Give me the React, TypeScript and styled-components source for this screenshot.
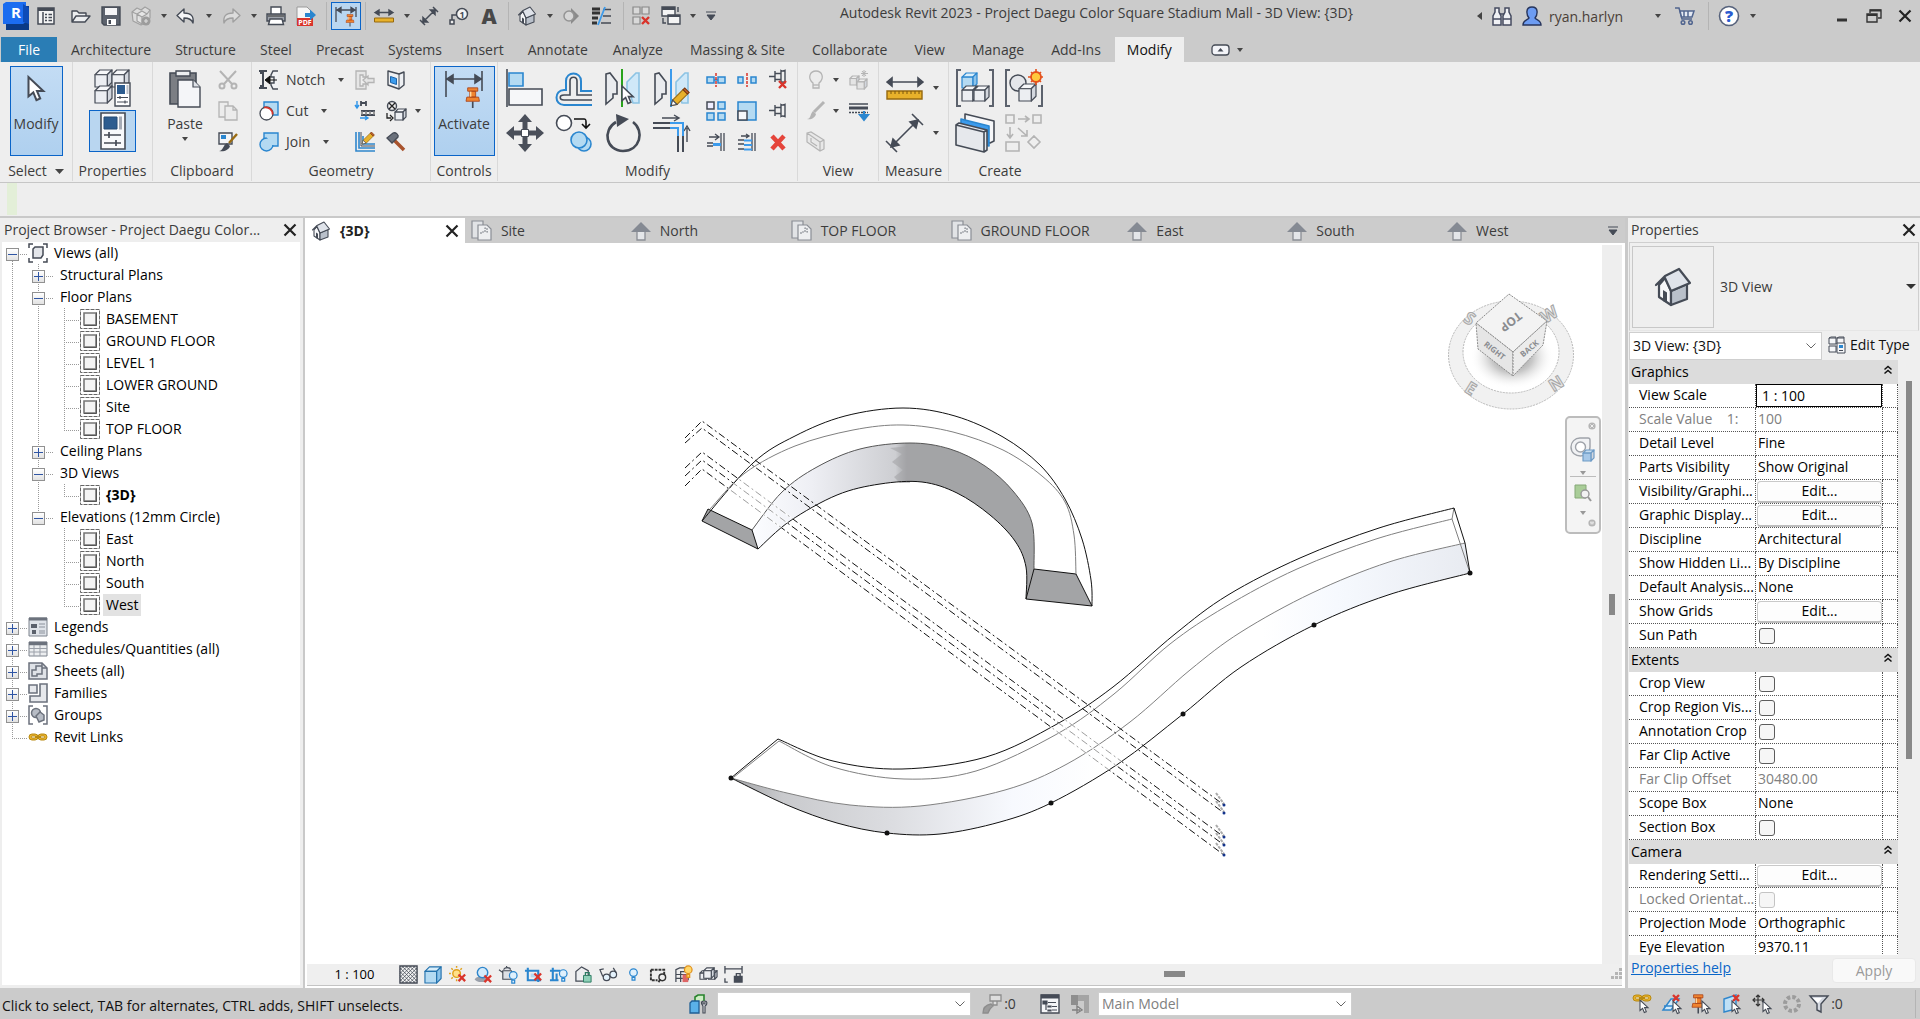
import React from 'react';
import styled, { createGlobalStyle, css } from 'styled-components';

const INK = '#454b56';
const BLUE = '#2a86cf';
const SKY = '#b4daf2';
const PALE = '#f6f7f9';
const MUTE = '#b4b4b4';
const RED = '#d9342b';
const GOLD = '#e8b12a';

/* ---------- drawings ---------- */

const cursor = (x: number, y: number, s = 1) => (
  <path
    transform={`translate(${x} ${y}) scale(${s})`}
    d="M0 0V10.500L2.600 8.300L4.300 12.500L6.300 11.600L4.600 7.600H8Z"
    fill="#fff"
    stroke={INK}
    strokeWidth="1.1"
  />
);
const cross = (x: number, y: number, s = 8) => (
  <path d={`M${x} ${y}l${s} ${s}M${x + s} ${y}l${-s} ${s}`} stroke={RED} strokeWidth="2.4" />
);
const cube = (x: number, y: number, w: number, top = PALE, front = '#eceef2', line = INK) => {
  const d = w * 0.28;
  const f = w - d;
  return (
    <g stroke={line} strokeWidth="1.2" strokeLinejoin="round">
      <path d={`M${x} ${y + d}l${d} ${-d}h${f}l${-d} ${d}z`} fill={top} />
      <path d={`M${x + f} ${y + d}l${d} ${-d}v${f}l${-d} ${d}z`} fill={SKY === front ? '#8cc3ea' : '#d3d7de'} />
      <rect x={x} y={y + d} width={f} height={f} fill={front} />
    </g>
  );
};
const house = (
  <g stroke={INK} strokeWidth="1.1" strokeLinejoin="round">
    <path d="M3 9v6l6 4V12L6 5.500z" fill={PALE} />
    <path d="M9 12v7l8-3V8.500z" fill="#b9c0ca" />
    <path d="M1.500 9L6 4.500l7-3.500 5.500 7L9 12 6 5.500z" fill="#dfe3ea" />
    <path d="M5 17v-5.500l2 1.200V18z" fill={INK} stroke="none" />
  </g>
);
const pushpin = (
  <g stroke="#a8421a" strokeWidth="1">
    <path d="M8 17v8" stroke={INK} strokeWidth="2" />
    <path d="M2 1h12v4H2zM4.500 5h7v7h-7zM1 12h14l1 5H0z" fill="#f0842f" />
    <path d="M5.500 5.500v6" stroke="#ffd9a0" strokeWidth="1.800" />
  </g>
);
const hPin = (
  <path d="M1 9.500h6M7 4v11M7 6.500h6M7 12.500h6M13 3.500c1.500 1 3 .500 4 0v12c-1-.500-2.500-1-4 0z" fill="none" stroke={INK} strokeWidth="1.400" />
);
const chain = (
  <g fill="none" stroke="#b98a12" strokeWidth="1">
    <rect x="1" y="3" width="9" height="6" rx="3" fill={GOLD} />
    <rect x="10" y="3" width="9" height="6" rx="3" fill={GOLD} />
    <rect x="3.500" y="5" width="4" height="2" rx="1" fill="#fff" />
    <rect x="12.500" y="5" width="4" height="2" rx="1" fill="#fff" />
    <path d="M7 6h6" strokeWidth="2" />
  </g>
);
const bulb = (x: number, y: number, line: string, fill: string) => (
  <g stroke={line} strokeWidth="1.300" fill={fill}>
    <circle cx={x} cy={y} r="4" />
    <path d={`M${x - 1.5} ${y + 5}h3v3h-3z`} />
  </g>
);
const pencil = (x: number, y: number, s = 1) => (
  <g transform={`translate(${x} ${y}) scale(${s})`} strokeWidth="1">
    <path d="M0 16l1.500-5L11 1.500l4 4L5.500 15z" fill={GOLD} stroke="#9a6b12" />
    <path d="M11 1.500L12.500 0l4 4-1.500 1.500z" fill="#c8642a" stroke="#7a3a12" />
    <path d="M0 16l1.500-5 4 4z" fill="#fff" stroke={INK} />
  </g>
);
const floorPlan = (
  <g stroke="#8a8e95" strokeWidth="1.200" fill="#e1e3e6">
    <path d="M1 1h11v17H1z" />
    <path d="M7 5h9l4 4v11H7z" fill="#eeeff1" />
    <path d="M10 14v-2h4V8h2v4h1" fill="none" strokeDasharray="2 1" />
  </g>
);
const elevation = (
  <g>
    <path d="M6 10h8v9H6z" fill="#e4e6e9" stroke="#8a8e95" strokeWidth="1.300" />
    <path d="M0 11L10 1l10 10z" fill="#858a93" />
  </g>
);
const dimArrow = (
  <path d="M4 16L16 4M16 4h-4.500l4.500 4.500zM4 16v-4.500L8.500 16zM1 14l5 5M14 1l5 5" stroke={INK} strokeWidth="1.500" fill={INK} />
);

type Drawing = [number, number, React.ReactNode];
const drawings: Record<string, Drawing> = {
  logo: [26, 28, <g key="g"><path d="M3 4h23v24H3z" fill="#0b3d91" /><path d="M3 20h23v8H3z" fill="#0a3a86" /><path d="M0 2l3-2h20v20l-3 2H0z" fill="#1b6cf0" /><path d="M20 2l6 4v16l-6-2z" fill="#0d4bb8" /><text x="13" y="16" textAnchor="middle" fontSize="15" fontWeight="700" fill="#fff">R</text></g>],
  home: [18, 18, <g key="g" fill="none" stroke={INK} strokeWidth="1.500"><path d="M1 1h16v16H1z" fill="#f4f4f4" /><path d="M1 2.500h16" strokeWidth="3" /><path d="M6 5v12M8 7.500h2M8 10.500h2M8 13.500h2M11.500 7.500H15M11.500 10.500H15M11.500 13.500H15" /></g>],
  open: [20, 18, <path key="g" d="M1 15V4h5l2 2h7v3M1 15L5 9h14l-5 6z" fill="#eceef0" stroke={INK} strokeWidth="1.400" strokeLinejoin="round" />],
  save: [20, 20, <g key="g"><path d="M1 1h18v18H3l-2-2z" fill="#5c626d" stroke={INK} strokeWidth="1.400" /><path d="M4 2h12v7H4z" fill="#f4f4f6" /><path d="M6 13h9v6H6z" fill="#fff" /><path d="M7.500 14h2.500v4H7.500z" fill={INK} /></g>],
  sync: [20, 20, <g key="g" stroke="#a0a0a0" strokeWidth="1.200" fill="#dcdcdc" strokeLinejoin="round"><path d="M1 6l5-4 4 2 4-3 5 3v8l-3 4-6 3-8-4z" /><path d="M6 8l5-3 5 3-5 3zM6 8v7l5 3M11 11v7M1 6l5 2M16 8l3-4" fill="#e6e6e6" /><circle cx="15" cy="15" r="4.500" fill="#9c9c9c" stroke="none" /><path d="M13 15h4M15 13v4" stroke="#ddd" /></g>],
  undo: [20, 18, <path key="g" d="M8 2v4c7 0 10 3 9 10-1.500-4-4-5-9-5v4L1 8.500z" fill="#f4f5f7" stroke={INK} strokeWidth="1.400" strokeLinejoin="round" />],
  redo: [20, 18, <path key="g" d="M12 2v4C5 6 2 9 3 16c1.500-4 4-5 9-5v4l7-6.500z" fill="#dcdcdc" stroke="#a0a0a0" strokeWidth="1.400" strokeLinejoin="round" />],
  print: [20, 20, <g key="g" stroke={INK} strokeWidth="1.400"><path d="M5 8V1h10v7" fill="#fff" /><path d="M1 8h18v7H1z" fill="#9da2ab" /><path d="M4 13h12l1.500 5.500h-15z" fill="#fff" /><path d="M2 10h16" stroke="#555" /></g>],
  pdf: [20, 20, <g key="g"><path d="M1 1h10l4 4v14H1z" fill="#f6f6f6" stroke="#999" /><path d="M1 12h16v8H1z" fill={RED} /><path d="M9 7h5V3.500l6 5.500-6 5.500V11H9z" fill={BLUE} /><text x="9" y="19" textAnchor="middle" fontSize="7" fontWeight="700" fill="#fff">PDF</text></g>],
  pinDim: [22, 20, <g key="g"><path d="M1 1v15M21 1v10M2 4h18M2 4l4-2.500v5zM20 4l-4-2.500v5z" stroke={INK} strokeWidth="1.300" fill={INK} /><g transform="translate(11 8) scale(.5)">{pushpin}</g></g>],
  ruler: [20, 14, <g key="g"><path d="M1 3.500h18M1 3.500L5 1v5zM19 3.500L15 1v5z" stroke={INK} strokeWidth="1.400" fill={INK} /><path d="M.500 9h19v4H.500z" fill={GOLD} stroke="#96690f" /></g>],
  dim: [20, 20, dimArrow],
  tag: [20, 18, <g key="g" fill="none" stroke={INK} strokeWidth="1.500"><path d="M3 14V8h6" /><path d="M1 13h4v4H1z" fill="#eee" /><circle cx="13" cy="7" r="5.500" fill="#f4f4f4" /><text x="13" y="10.500" textAnchor="middle" fontSize="9" fontWeight="700" fill={INK} stroke="none">1</text></g>],
  textA: [20, 28, <text key="g" x="10" y="22" textAnchor="middle" fontSize="21" fontWeight="800" fill="#484848">A</text>],
  house: [20, 20, house],
  section: [18, 18, <g key="g"><path d="M9 1l8 8-8 8z" fill="#8a8a8a" /><circle cx="7" cy="9" r="5" fill="#d6d6d6" stroke="#949494" strokeWidth="1.500" /></g>],
  thin: [20, 20, <g key="g"><path d="M0 3h8M0 7h8M0 12h6M0 17h5" stroke="#333" strokeWidth="3" /><path d="M11 3.500h8M11 10h8M9 17h10" stroke={INK} strokeWidth="1.500" /><path d="M6 19L13 1" stroke="#3c9bec" strokeWidth="1.800" /></g>],
  closeHidden: [20, 20, <g key="g" fill="#d9d9d9" stroke="#888" strokeWidth="1.200"><path d="M1 1h7v7H1zM10 1h7v7h-7zM1 11h7v7H1z" />{cross(10, 11, 7)}</g>],
  switchWin: [20, 20, <g key="g" fill="#f4f4f4" stroke={INK} strokeWidth="1.400"><path d="M1 1h13v9H1z" /><path d="M1 2.500h13" strokeWidth="3" /><path d="M7 9h12v9H7z" /><path d="M7 10h12" strokeWidth="2" /><path d="M17 1v5M2 12v5h3" fill="none" /></g>],
  customize: [10, 10, <path key="g" d="M0 1h10M1 4h8L5 9z" fill={INK} stroke={INK} />],
  binoculars: [22, 20, <g key="g" fill="#f0f1f5" stroke="#454b60" strokeWidth="1.500"><path d="M4 2h4v4l2 4v9H2v-9l2-4zM14 2h4v4l2 4v9h-8v-9l2-4z" /><path d="M9 8h4M2 13h8M12 13h8" /></g>],
  user: [20, 20, <path key="g" d="M10 1c7 0 5.500 8 3 11 1 2 6 2 6 7H1c0-5 5-5 6-7-2.500-3-4-11 3-11z" fill="#6d9cf2" stroke="#27355c" strokeWidth="1.400" />],
  cart: [20, 20, <g key="g" stroke="#51658f" strokeWidth="1.500" fill="none"><path d="M0 2h4l3 11h10" /><path d="M5 5h14l-2 6H6.500z" fill="#e4e9f2" /><path d="M9 5v6M13 5v6" /><circle cx="8" cy="16.500" r="1.800" /><circle cx="15.500" cy="16.500" r="1.800" /></g>],
  help: [22, 22, <g key="g"><circle cx="11" cy="11" r="9.500" fill="#fff" stroke="#56627c" strokeWidth="1.600" /><text x="11" y="17" textAnchor="middle" fontSize="16" fontWeight="800" fill="#2a5bd0">?</text></g>],
  ribbonState: [20, 12, <g key="g"><rect x="1" y="1" width="17" height="10" rx="3" fill="#f3f4f8" stroke={INK} strokeWidth="1.300" /><path d="M6.500 7.500L9.500 4l3 3.500z" fill={INK} /></g>],
  winMin: [12, 12, <path key="g" d="M1 10h10" stroke="#333" strokeWidth="3" />],
  winRestore: [16, 16, <g key="g" fill="none" stroke="#333" strokeWidth="1.400"><path d="M4 5V2h11v8h-3" /><path d="M1 6h10v8H1z" /><path d="M1 7h10M4 2.500h11" strokeWidth="2" /></g>],
  winClose: [14, 14, <path key="g" d="M1.500 1.500l11 11M12.500 1.500l-11 11" stroke="#222" strokeWidth="2.200" />],

  modify: [18, 28, <g key="g">{cursor(1.5, 2, 1.85)}</g>],
  typeProps: [38, 38, <g key="g">{cube(1, 1, 17)}{cube(18, 1, 17)}{cube(1, 17, 17)}<path d="M21 14h15v23H21z" fill="#fff" stroke={INK} strokeWidth="1.400" /><path d="M23 16h8v9h-8z" fill="#2d5c8f" /><path d="M32.500 16h2v9h-2z" fill="#b9bdc6" /><path d="M23 28.500h11M23 33h11M26 27v3M31 31.500v3" stroke={INK} strokeWidth="1.200" /></g>],
  props: [28, 38, <g key="g"><path d="M2 1h24v36H2z" fill="#f8f9fb" stroke={INK} strokeWidth="1.600" /><path d="M5 5h13v12H5z" fill="#2d5c8f" stroke="#254a75" /><path d="M20 4.500h3v13h-3z" fill="#a5abb6" /><path d="M5 23h17M5 31h17M10 20v6M17 28v6" stroke={INK} strokeWidth="1.700" /></g>],
  paste: [34, 38, <g key="g"><path d="M2 3h26v31H2z" fill="#7b7e84" stroke={INK} strokeWidth="1.600" /><path d="M8 1h14v5H8z" fill="#eceef0" stroke={INK} strokeWidth="1.400" /><path d="M10 10h15l7 7v20H10z" fill="#f4f5f8" stroke={INK} strokeWidth="1.400" /><path d="M25 10v7h7" fill="#dfe2e8" stroke={INK} strokeWidth="1.200" /></g>],
  scissors: [20, 20, <g key="g" fill="none" stroke={MUTE} strokeWidth="2"><path d="M2 1l12 13M18 1L6 14" /><circle cx="4" cy="16" r="2.500" /><circle cx="16" cy="16" r="2.500" /></g>],
  copyClip: [20, 20, <g key="g" fill="#ececec" stroke={MUTE} strokeWidth="1.300"><path d="M1 1h9v15H1z" /><path d="M7 5h8l4 4v10H7zM15 5v4h4" /></g>],
  matchBrush: [20, 20, <g key="g"><path d="M1 1h13v11H1z" fill="#f4f5f7" stroke={INK} strokeWidth="1.400" /><path d="M3 3h5v4H3z" fill={BLUE} /><path d="M19 2l-8 9" stroke="#9a6b12" strokeWidth="2.400" /><path d="M1 19c4 0 4-6 8-8l3 3c-1 4-6 6-11 5z" fill={INK} /></g>],
  notch: [20, 20, <g key="g"><path d="M0 1h8M0 18h8M4 1v17M2 1v3M2 18v-3" stroke={INK} strokeWidth="2" /><path d="M19 1h-5l-2 4v2h3v6h-3v2l2 4h5" fill="#f0f1f3" stroke={INK} strokeWidth="1.400" /><path d="M7 10h11M11 6v8l-5-4z" fill="#111" stroke="#111" /></g>],
  cut: [20, 20, <g key="g"><path d="M5 1h14v13H5z" fill={SKY} stroke={BLUE} strokeWidth="1.400" /><circle cx="7.500" cy="12.500" r="6.500" fill="#fff" stroke={INK} strokeWidth="1.300" /><path d="M5 6.500c5-1 9 3 8.500 7" fill="none" stroke={RED} strokeWidth="1.600" /></g>],
  join: [20, 20, <g key="g" fill={SKY} stroke={BLUE} strokeWidth="1.400"><path d="M5 1h14v13H5z" /><circle cx="7.500" cy="12.500" r="6.500" /><path d="M6 3h12v10h-5z" stroke="none" /></g>],
  wallOpen: [20, 20, <path key="g" d="M1 1h10v6H8V5H5v11h3v-2h3v5H1zM8 10l5-4v2.500h6v4h-6V15z" fill="#e6e6e6" stroke={MUTE} strokeWidth="1.300" />],
  splitFace: [20, 20, <g key="g"><path d="M2 1l11 3 5-2v13l-5 4-11-4z" fill="#eef0f3" stroke={INK} strokeWidth="1.400" strokeLinejoin="round" /><path d="M13 4v15" stroke={INK} /><path d="M4.500 6.500l6 2v6l-6-2z" fill="#3c9bec" stroke="#1c62a8" /></g>],
  cope: [20, 20, <g key="g" fill="none"><path d="M2 0v6M0 4l2 3 2-3M5 17h7M10 15l3 2-3 2" stroke="#2e94e8" strokeWidth="1.400" /><path d="M6 0v5M11 0v5M6 2h5M6 10h14M6 14h14" stroke={INK} strokeWidth="1.800" /><path d="M6 12h14" stroke="#999" strokeDasharray="2 2" strokeWidth="3" /></g>],
  demolish: [20, 20, <g key="g"><circle cx="6" cy="5" r="4.500" fill="#eee" stroke={INK} strokeWidth="1.400" /><path d="M3 2l6 6M9 2L3 8M1 12v5h4M4 14l3 3-3 3" stroke="#222" fill="none" strokeWidth="1.300" />{cube(9, 8, 11)}</g>],
  wallJoin: [20, 20, <g key="g" fill="none"><path d="M1 0v19h19M4 0v16h16M8 4v8h12" stroke="#2f86cc" strokeWidth="1.600" /><path d="M6 0v14h14" stroke={INK} />{pencil(7, 0, 0.75)}</g>],
  hammer: [20, 20, <g key="g"><path d="M8 8l10 10" stroke="#a8532d" strokeWidth="3.500" /><path d="M1 6l6-5c3-1 6 2 5 4l-6 6z" fill="#6b717c" stroke={INK} strokeWidth="1.300" /></g>],
  activate: [38, 38, <g key="g"><path d="M1 1v26M37 1v20M2 9h34M2 9l6-4v8zM36 9l-6-4v8z" stroke={INK} strokeWidth="1.600" fill={INK} /><g transform="translate(21 17) scale(.84)">{pushpin}</g></g>],

  align: [38, 38, <g key="g"><path d="M1 0v38" stroke={INK} strokeWidth="1.600" /><path d="M3 4h14v13H3z" fill={SKY} stroke={BLUE} strokeWidth="1.600" /><path d="M3 20h33v16H3z" fill={PALE} stroke={INK} strokeWidth="1.600" /></g>],
  offset: [38, 38, <g key="g" fill="none"><path d="M37 36H9c-10 0-10-15 0-15h2V12c0-10 15-10 15 0v10h11" stroke={BLUE} strokeWidth="2" /><path d="M37 31H9c-5 0-5-5 0-5h6V12c0-5 7-5 7 0v14h15" stroke={INK} strokeWidth="1.600" /></g>],
  mirrorPick: [38, 38, <g key="g" strokeWidth="1.600"><path d="M2 5l4-1 7 9v12h-4v4l-7 6z" fill="#e9ebee" stroke={INK} /><path d="M35 4h-3l-9 9v13l4 2 2 6h6z" fill="#cfe8f8" stroke="#8cc3e4" /><path d="M18 0v38" stroke="#29a31a" strokeWidth="2" />{cursor(18, 17, 1.4)}</g>],
  mirrorDraw: [38, 38, <g key="g" strokeWidth="1.600"><path d="M2 5l4-1 7 9v12h-4v4l-7 6z" fill="#e9ebee" stroke={INK} /><path d="M35 4h-3l-9 9v13l4 2 2 6h6z" fill="#cfe8f8" stroke="#8cc3e4" /><path d="M18 0v38" stroke="#3c9bec" strokeWidth="2" />{pencil(18, 19, 1.1)}</g>],
  move: [38, 38, <g key="g" fill="#4a4f5a"><path d="M19 0l7 8h-4.500v7h-5V8H12zM19 38l7-8h-4.500v-7h-5v7H12zM0 19l8-7v4.500h7v5H8V26zM38 19l-8-7v4.500h-7v5h7V26z" /><path d="M15.500 15.500h7v7h-7z" fill="#fff" stroke={INK} /></g>],
  copy: [38, 38, <g key="g" strokeWidth="1.600"><circle cx="9" cy="9" r="7.500" fill="#fff" stroke={INK} /><path d="M19 5h10c2 0 2 1 2 3v5M27 10l4 4 4-4" fill="none" stroke="#111" /><circle cx="29" cy="30" r="7" fill={SKY} stroke={BLUE} /><circle cx="24" cy="26" r="8" fill={SKY} stroke={BLUE} /></g>],
  rotate: [38, 38, <g key="g"><path d="M12 8C-2 16 2 37 19 37S41 17 29 8" fill="none" stroke={INK} strokeWidth="2.600" /><path d="M12 0l13 5-12 8z" fill={INK} /></g>],
  trim: [38, 38, <g key="g" fill="none"><path d="M9 4h16M21 1l5 3-5 3M34 28V14M31 17l3-5 3 5" stroke={INK} strokeWidth="1.400" /><path d="M0 9h17M0 14h17M25 22v16M30 22v16" stroke={INK} strokeWidth="2" /><path d="M17 9h13v13M17 14h8v8" stroke="#3c9bec" strokeWidth="2" /></g>],
  split: [20, 20, <g key="g"><path d="M1 7h7v6H1zM12 7h7v6h-7zM8 10h4" fill={SKY} stroke={BLUE} strokeWidth="1.500" /><path d="M10 3v14" stroke={RED} strokeWidth="1.500" strokeDasharray="3 1" /></g>],
  splitGap: [20, 20, <g key="g"><path d="M1 7h5v6H1zM14 7h5v6h-5z" fill={SKY} stroke={BLUE} strokeWidth="1.500" /><path d="M10 3v14" stroke={RED} strokeWidth="1.500" strokeDasharray="3 1" /></g>],
  unpin: [20, 20, <g key="g"><g transform="translate(0 -3)">{hPin}</g>{cross(11, 11, 7)}</g>],
  array: [20, 20, <g key="g" strokeWidth="1.500"><path d="M1 1h7v7H1z" fill="#eef" stroke={INK} /><path d="M12 1h7v7h-7zM1 12h7v7H1zM12 12h7v7h-7z" fill={SKY} stroke={BLUE} /></g>],
  scale: [20, 20, <g key="g" strokeWidth="1.500"><path d="M1 1h18v18H1z" fill={SKY} stroke={BLUE} /><path d="M1 10h9v9H1z" fill={PALE} stroke={INK} /></g>],
  pin: [20, 20, hPin],
  trimOne: [20, 20, <g key="g"><path d="M18 1v18M15 1v18M1 11h6M1 14h6M3 5h9M9 2l4 3-4 3" stroke={INK} strokeWidth="1.300" fill="none" /><path d="M7 12.500h8" stroke="#3c9bec" strokeWidth="3" /></g>],
  trimMany: [20, 20, <g key="g"><path d="M18 1v18M15 1v18M1 8h6M1 12h6M1 17h6M4 4h8M9 2l3 2-3 2" stroke={INK} strokeWidth="1.300" fill="none" /><path d="M7 8.500h8M7 13h8M7 17.500h8" stroke="#3c9bec" strokeWidth="2" /></g>],
  remove: [20, 20, <path key="g" d="M4 4l12 13M16 4L4 17" stroke="#e5453b" strokeWidth="4.500" />],
  hideBulb: [20, 20, <g key="g" fill="#ececec" stroke={MUTE} strokeWidth="1.300"><path d="M7 13C1 8 4 1 10 1s9 7 3 12v5H7z" /><path d="M7 15h6" /></g>],
  displace: [20, 20, <g key="g">{cube(1, 6, 9, '#eee', '#e4e4e4', MUTE)}{cube(8, 9, 10, '#eee', '#e4e4e4', MUTE)}<path d="M15 0v7M12 3.500h7M13 1l4 5M17 1l-4 5" stroke={MUTE} /></g>],
  override: [20, 20, <g key="g"><path d="M18 1L8 11" stroke={MUTE} strokeWidth="3" /><path d="M1 18c4 0 3-5 6-8l3 3c-1 4-5 6-9 5z" fill={MUTE} /></g>],
  linework: [20, 20, <g key="g"><path d="M0 3h19" stroke={INK} strokeWidth="1.500" /><path d="M0 7h19" stroke={INK} strokeWidth="3" /><path d="M0 11.500h19" stroke={INK} strokeWidth="1.500" strokeDasharray="2 1" /><path d="M15 10v4M11 14h8l-4 5z" stroke={BLUE} strokeWidth="2" fill={BLUE} /></g>],
  viewBox: [20, 20, <path key="g" d="M1 1l4-1 13 8v9l-4 2L1 10zM1 1l13 9v9M14 10l4-2M5 6l0 4 6 4" fill="#e8e8e8" stroke={MUTE} strokeWidth="1.200" />],
  measure: [38, 24, <g key="g"><path d="M1 6h36M1 6l5-4v8zM37 6l-5-4v8z" stroke={INK} strokeWidth="1.600" fill={INK} /><path d="M1 15h35v8H1z" fill={GOLD} stroke="#96690f" strokeWidth="1.400" /><path d="M5 15v3M9 15v3M13 15v3M17 15v3M21 15v3M25 15v3M29 15v3M33 15v3" stroke="#7a560c" /></g>],
  aligned: [38, 38, <path key="g" d="M5 33L32 6M32 6l-8 2 6 6zM5 33l2-8 6 6zM0 27l11 11M26 0l11 11" stroke={INK} strokeWidth="1.600" fill={INK} />],
  assembly: [38, 38, <g key="g"><path d="M5 1H1v36h4M33 1h4v36h-4" fill="none" stroke="#5c626d" strokeWidth="2" />{cube(6, 4, 15, '#d9eefa', SKY, BLUE)}{cube(6, 17, 15)}{cube(18, 17, 15)}</g>],
  group: [38, 38, <g key="g"><path d="M5 1H1v36h4M33 37h4V16" fill="none" stroke="#5c626d" strokeWidth="2" /><circle cx="13" cy="14" r="8" fill="#e4e6ea" stroke={INK} strokeWidth="1.400" />{cube(14, 15, 17)}<circle cx="31" cy="8" r="5" fill="#ffc83c" stroke="#e4511c" strokeWidth="1.800" /><path d="M31 0v3M31 13v3M23 8h3M36 8h2M26 3l2 2M36 13l-2-2M26 13l2-2M36 3l-2 2" stroke="#e4511c" strokeWidth="1.600" /></g>],
  parts: [40, 40, <g key="g" strokeWidth="1.600" strokeLinejoin="round"><path d="M10 1l29 7v20l-4 2-25-7z" fill={PALE} stroke={INK} /><path d="M6 6l28 7v20L6 26z" fill="#3c9bec" stroke={BLUE} /><path d="M1 12l3-2 28 7-3 2v20L1 32zM32 17v20l-3 2V19zM1 12l28 7" fill="#e6e8ec" stroke={INK} /></g>],
  similar: [38, 38, <g key="g" fill="none" stroke={MUTE} strokeWidth="1.600"><path d="M1 1h8v8H1zM28 1h8v8h-8zM1 28h13v9H1zM29 22l6 6-6 6-6-6zM13 5h11M20 2l4 3-4 3M5 13v11M2 20l3 4 3-4M13 14l9 8M22 16v6h-6" /></g>],

  viewsRoot: [20, 20, <g key="g" fill="none" stroke={INK} strokeWidth="1.500"><path d="M1 5V1h4M15 1h4v4M19 15v4h-4M5 19H1v-4" /><path d="M5 6l2-2h8v8l-2 3H5z" fill="#e4e6ea" /></g>],
  sheetIcon: [20, 20, <g key="g"><path d="M.500.500h19v19H.500z" fill="none" stroke="#666" strokeDasharray="4 1" /><path d="M4 4h12v12H4z" fill="#f4f4f4" stroke="#777" strokeWidth="1.600" /><path d="M16.500 3.500V16.500H4" fill="none" stroke="#555" /></g>],
  legends: [20, 20, <g key="g"><path d="M1 1h18v18H1z" fill="#dfe3e9" stroke="#7d838d" /><path d="M1 2h18" stroke="#6c727d" strokeWidth="3" /><path d="M3 7h6v4H3zM4 13h4v4H4z" fill="#5b616c" /><path d="M11 7h6M11 10h6M11 14h6M11 16h6" stroke="#8b919b" /></g>],
  schedules: [20, 16, <g key="g"><path d="M1 1h18v14H1z" fill="#eceef0" stroke="#7d838d" /><path d="M1 2.500h18" stroke="#6c727d" strokeWidth="3.500" /><path d="M6 4v11M12 4v11M1 7.500h18M1 11h18" stroke="#9ba0a9" /></g>],
  sheets: [20, 18, <g key="g" fill="#dfe2e7" stroke="#6c727d" strokeWidth="1.500"><path d="M1 1h13l5 5v11H1z" /><path d="M4 14V8h4V4h6v8H9v2zM14 1v5h5" fill="none" /></g>],
  families: [20, 20, <path key="g" d="M1 2h8v8H1zM12 1h7v18H2v-6h10z" fill="#e6e8ec" stroke="#6c727d" strokeWidth="1.600" />],
  groups: [20, 20, <g key="g" fill="#b7bcc5" stroke="#6c727d" strokeWidth="1.500"><path d="M5 1H1v18h4M15 1h4v18h-4" fill="none" /><circle cx="8" cy="8" r="4.500" /><path d="M8 11l4-4 4 3v5l-5 2z" /></g>],
  links: [20, 12, chain],
  plan: [21, 21, floorPlan],
  elev: [20, 20, elevation],

  editType: [18, 18, <g key="g" fill="#f6f7f9" stroke={INK}><path d="M1 2h7v6H1zM9 2h7v6H9zM1 10h7v6H1zM1 2l2-1h5v1M9 2l2-1h5v1" /><path d="M9 7h8v10H9z" /><path d="M11 9h4v3h-4z" fill={BLUE} stroke="none" /><path d="M11 14.500h4" /></g>],
  collapse: [10, 10, <path key="g" d="M1.500 4.500L5 1.500l3.500 3M1.500 8.500L5 5.500l3.500 3" fill="none" stroke="#111" strokeWidth="1.500" />],
  chevron: [10, 6, <path key="g" d="M.500.500L5 5 9.500.500" fill="none" stroke="#666" />],

  vDetail: [20, 20, <g key="g" stroke={INK}><path d="M1 1h18v18H1z" fill="#f4f4f4" strokeWidth="1.500" /><path d="M1 5l4-4M1 9l8-8M1 13L13 1M1 17L17 1M3 19L19 3M7 19L19 7M11 19l8-8M15 19l4-4M5 19L1 15M9 19l-8-8M13 19L1 7M17 19L1 3M19 17L3 1M19 13L7 1M19 9l-8-8M19 5l-4-4" strokeWidth=".800" /></g>],
  vStyle: [20, 20, <g key="g">{cube(1, 2, 17, '#d9eefa', SKY, '#2472ad')}</g>],
  vSun: [20, 20, <g key="g"><circle cx="8" cy="9" r="4" fill="#ffe08a" stroke="#e0a01c" strokeWidth="1.500" /><path d="M8 1v2M8 15v2M0 9h2M2.500 3.500l1.500 1.500M13.500 3.500L12 5M2.500 14.500L4 13" stroke="#e0a01c" strokeWidth="1.500" />{cross(10, 10, 7)}</g>],
  vShadow: [20, 20, <g key="g"><ellipse cx="8" cy="15" rx="7" ry="3" fill="#9aa0aa" /><circle cx="9" cy="8" r="5.500" fill="#d4ebfa" stroke="#2f86cc" strokeWidth="1.500" />{cross(11, 11, 7)}</g>],
  vRender: [20, 20, <g key="g"><path d="M4 6h9l1 9H4zM5 5c0-3 7-3 7 0M4 8L0 5M8 2V1" fill="#dde0e5" stroke={INK} strokeWidth="1.200" />{bulb(15, 11, BLUE, '#dff0fc')}</g>],
  vCrop: [20, 20, <g key="g"><path d="M4 3v13h14M1 6h14v12" fill="none" stroke={BLUE} strokeWidth="2.200" /><path d="M7 9h5v4H7z" fill={SKY} />{cross(11, 9, 7)}</g>],
  vCropShow: [20, 20, <g key="g"><path d="M4 3v14M1 6h11M1 16h9M8 9v6" fill="none" stroke={BLUE} strokeWidth="2.200" />{bulb(15, 9, BLUE, '#dff0fc')}</g>],
  vLock: [20, 20, <g key="g"><path d="M2 17V7l6-5 7 4v11z" fill="#eceef0" stroke={INK} strokeWidth="1.300" /><path d="M10 11h8v7h-8z" fill="#8fd0b8" stroke="#2b7a62" /><path d="M12 11V8h4v3" fill="none" stroke="#2b7a62" strokeWidth="1.300" /></g>],
  vGlasses: [20, 20, <g key="g" fill="#e4f2fc" stroke={INK} strokeWidth="1.300"><circle cx="8" cy="13" r="3.500" /><circle cx="15" cy="10" r="3.500" /><path d="M4 12L1 5l4-1M18 8l-3-5" fill="none" /></g>],
  vReveal: [20, 20, <g key="g">{bulb(10, 8, BLUE, '#dff0fc')}</g>],
  vWork: [20, 20, <g key="g" fill="none" stroke="#333" strokeWidth="2"><path d="M2 5h14v5M2 5v11h7" strokeDasharray="3 1" /><circle cx="14" cy="13" r="3.500" strokeWidth="1.500" fill="#eee" /><path d="M12 15l-2 3" /></g>],
  vAnalytical: [20, 20, <g key="g"><path d="M2 18V5l4-2h9v13M7 18V7h8M2 10h13M2 14h13" fill="none" stroke={INK} strokeWidth="1.300" /><path d="M9 10h6v8H9z" fill="#d66" />{bulb(15, 5, '#e0901c', '#ffd76a')}</g>],
  vDisplace: [20, 20, <g key="g">{cube(1, 6, 9)}{cube(10, 6, 9)}{cube(5, 3, 11)}</g>],
  vConstraint: [20, 20, <g key="g" fill="none" stroke={INK} strokeWidth="1.400"><path d="M1 1v8M19 1v8M1 4h18M4 18H1v-4" /><path d="M11 12h8v6h-8z" fill={INK} /><path d="M13 12V9h4v3" /></g>],

  worksets: [20, 20, <g key="g"><path d="M6 7V3l3-2h6v6" fill="#cdeec4" stroke="#27832c" strokeWidth="1.600" /><path d="M1 9l2-2h7v12H1z" fill="#5ab1e8" stroke="#1f5f95" strokeWidth="1.300" /><path d="M14 19v-7c-3-3-1-5 0-5v3h2V7c2 0 3 3 0 5v7z" fill="#f4f5f8" stroke={INK} strokeWidth="1.200" /></g>],
  editable: [20, 20, <g key="g" fill="#dedede" stroke="#8d8d8d" strokeWidth="1.300"><path d="M8 1h11v6H8zM11 7v4h4V7" /><path d="M1 19c0-5 3-8 8-9l2 2c-3 2-4 4-5 7z" fill="#9c9c9c" /></g>],
  options: [20, 20, <g key="g"><path d="M1 1h18v18H1z" fill="#f4f5f7" stroke={INK} strokeWidth="1.400" /><path d="M1 2.500h18" stroke={INK} strokeWidth="4" /><path d="M3 7h4v3H3zM8 8.500h8M6 10v6M8 12h3v1H8zM12 12.500h5M8 16h3v1H8zM12 16h5" stroke={INK} fill={INK} strokeWidth="1.200" /></g>],
  pickEdit: [20, 20, <g key="g"><path d="M1 1h18v18h-5V7H1z" fill="#a4a4a4" /><path d="M1 1h7v10H1z" fill="#8e8e8e" /><path d="M2 16h8M7 12l5 4-5 3z" fill="#e4e4e4" stroke="#808080" strokeWidth="1.400" /></g>],
  selLinks: [20, 20, <g key="g"><g transform="translate(0 -2)">{chain}</g>{cursor(8, 6)}</g>],
  selUnderlay: [20, 20, <g key="g"><path d="M1 16L9 5h8L9 16zM2 12h12" fill="#d4ebfa" stroke="#2f86cc" strokeWidth="1.400" />{cross(11, 1, 6)}{cursor(11, 7)}</g>],
  selPinned: [20, 20, <g key="g"><g transform="translate(0 0) scale(.78)">{pushpin}</g>{cursor(10, 7)}</g>],
  selFace: [20, 20, <g key="g"><path d="M2 5l12-4v14L2 18z" fill="#bfe0f6" stroke="#2f86cc" strokeWidth="1.400" />{cross(11, 1, 6)}{cursor(10, 7)}</g>],
  dragSel: [20, 20, <g key="g"><path d="M6 1v11M1 6h11M4 3l2-2 2 2M4 10l2 2 2-2M3 4L1 6l2 2M10 4l2 2-2 2" fill="none" stroke="#333" strokeWidth="1.200" />{cursor(11, 7)}</g>],
  background: [20, 20, <circle key="g" cx="10" cy="10" r="7" fill="none" stroke="#9c9c9c" strokeWidth="4" strokeDasharray="3.500 2" />],
  filter: [20, 20, <g key="g"><path d="M1 2h18l-7 8v8l-4-2v-6z" fill="#d6dae2" stroke={INK} strokeWidth="1.400" /><path d="M4 4h9l-4 5z" fill="#fff" /></g>],
  grip: [12, 12, <path key="g" d="M9 0h3v3H9zM5 4h3v3H5zM9 4h3v3H9zM1 8h3v3H1zM5 8h3v3H5zM9 8h3v3H9z" fill="#b5b5b5" />],
  wheel: [26, 26, <g key="g"><path d="M10 1h8c2 0 2 1 2 2v7c0 12-19 12-19 0 0-5 4-9 9-9z" fill="#f1f2f4" stroke="#9ea2a9" strokeWidth="1.400" /><circle cx="10.500" cy="10" r="5" fill="#fff" stroke="#9ea2a9" strokeWidth="1.400" />{cube(13, 13, 11, '#c6ddf1', '#a7c8e8', '#6f9cc6')}</g>],
  zoomRegion: [18, 18, <g key="g"><path d="M1 1h11v13H1z" fill="#a9cd98" stroke="#85a877" /><circle cx="11" cy="10" r="4" fill="#f2f2f2" stroke="#999" strokeWidth="1.400" /><path d="M14 13l3 4" stroke="#999" strokeWidth="2" /></g>],
  navClose: [10, 10, <g key="g"><circle cx="5" cy="5" r="4.500" fill="#b5b5b5" /><path d="M3 3l4 4M7 3L3 7" stroke="#fff" /></g>],
  navMenu: [10, 10, <g key="g"><circle cx="5" cy="5" r="4.500" fill="#b5b5b5" /><path d="M2.500 4h5M3 6h4" stroke="#fff" /></g>],
};

const Glyph = styled.svg`
  display: block;
  flex: none;
  overflow: visible;
`;
const Icon = ({ name, scale = 1 }: { name: string; scale?: number }) => {
  const [w, h, body] = drawings[name];
  return (
    <Glyph width={w * scale} height={h * scale} viewBox={`0 0 ${w} ${h}`} aria-hidden="true">
      {body}
    </Glyph>
  );
};
const Caret = ({ color = '#454545' }: { color?: string }) => (
  <Glyph width="6" height="4" viewBox="0 0 6 4" aria-hidden="true">
    <path d="M0 0h6L3 4z" fill={color} />
  </Glyph>
);

/* ---------- shell ---------- */

const Global = createGlobalStyle`
  *, *::before, *::after { box-sizing: border-box; }
  body { margin: 0; background: #cccccc; }
  body, button, input, select { font-family: "Open Sans", "Noto Sans", sans-serif; font-size: 14px; color: #3c3c3c; }
  button { padding: 0; margin: 0; border: 0; background: none; cursor: pointer; }
  ul { list-style: none; margin: 0; padding: 0; }
`;
const Shell = styled.div`
  display: flex;
  flex-direction: column;
  height: 100vh;
  overflow: hidden;
  background: #cbcbcb;
  line-height: 20px;
  white-space: nowrap;
`;

/* ---------- title bar ---------- */

const TitleBar = styled.header`
  display: flex;
  align-items: flex-start;
  height: 37px;
`;
const Tools = styled.div`
  display: flex;
  align-items: center;
  height: 32px;
`;
const Tool = styled.button<{ $w?: number; $on?: boolean }>`
  display: flex;
  align-items: center;
  justify-content: center;
  width: ${p => p.$w ?? 30}px;
  height: 28px;
  ${p => p.$on && css`background: #b9d6f0; border: 1px solid #0a64c8;`}
`;
const Rule = styled.span<{ $w?: number }>`
  width: ${p => p.$w ?? 10}px;
  height: 28px;
  background: linear-gradient(#b4b4b4, #b4b4b4) center / 1px 100% no-repeat;
`;
const Gap = styled.span<{ $w: number }>`
  width: ${p => p.$w}px;
`;
const Title = styled.h1`
  flex: 1;
  margin: 0;
  padding-top: 2px;
  font-size: 14px;
  font-weight: 400;
  line-height: 22px;
  text-align: center;
`;
const Account = styled.button`
  display: flex;
  align-items: center;
  justify-content: space-between;
  gap: 7px;
  width: 141px;
  padding-right: 2px;
`;
const UserName = styled.span`
  flex: 1;
  text-align: left;
  color: #4a4038;
`;

type QatItem = { icon: string; label: string; w?: number; menu?: boolean; on?: boolean; rule?: number; gap?: number };
const quickAccess: QatItem[] = [
  { icon: 'logo', label: 'Revit', w: 31 },
  { icon: 'home', label: 'Home', gap: 5 },
  { icon: 'open', label: 'Open' },
  { icon: 'save', label: 'Save' },
  { icon: 'sync', label: 'Synchronize', menu: true },
  { icon: 'undo', label: 'Undo', menu: true },
  { icon: 'redo', label: 'Redo', menu: true },
  { icon: 'print', label: 'Print' },
  { icon: 'pdf', label: 'Export PDF', rule: 10 },
  { icon: 'pinDim', label: 'Activate controls', on: true, rule: 8 },
  { icon: 'ruler', label: 'Measure', menu: true },
  { icon: 'dim', label: 'Aligned dimension' },
  { icon: 'tag', label: 'Tag by category' },
  { icon: 'textA', label: 'Text', rule: 8 },
  { icon: 'house', label: 'Default 3D view', menu: true },
  { icon: 'section', label: 'Section', w: 28 },
  { icon: 'thin', label: 'Thin lines', w: 34, rule: 8 },
  { icon: 'closeHidden', label: 'Close inactive views' },
  { icon: 'switchWin', label: 'Switch windows', w: 28, menu: true },
  { icon: 'customize', label: 'Customize', w: 22 },
];

const AppTitle = () => (
  <TitleBar>
    <Tools>
      {quickAccess.map(q => (
        <React.Fragment key={q.label}>
          <Tool $w={q.w} $on={q.on} aria-label={q.label}><Icon name={q.icon} /></Tool>
          {q.menu && <Tool $w={15} aria-label={`${q.label} menu`}><Caret /></Tool>}
          {q.gap && <Gap $w={q.gap} />}
          {q.rule && <Rule $w={q.rule} />}
        </React.Fragment>
      ))}
    </Tools>
    <Title>Autodesk Revit 2023 - Project Daegu Color Square Stadium Mall - 3D View: {'{3D}'}</Title>
    <Tools>
      <Tool $w={16} aria-label="Collapse search">
        <Glyph width="5" height="8" viewBox="0 0 5 8"><path d="M5 0v8L0 4z" fill="#444" /></Glyph>
      </Tool>
      <Tool aria-label="Search"><Icon name="binoculars" /></Tool>
      <Gap $w={5} />
      <Account><Icon name="user" /><UserName>ryan.harlyn</UserName><Caret /></Account>
      <Gap $w={4} />
      <Tool $w={36} aria-label="Store"><Icon name="cart" /></Tool>
      <Rule />
      <Tool $w={32} aria-label="Help"><Icon name="help" /></Tool>
      <Tool $w={15} aria-label="Help menu"><Caret /></Tool>
      <Gap $w={66} />
      <Tool $w={32} aria-label="Minimize"><Icon name="winMin" /></Tool>
      <Tool $w={32} aria-label="Restore"><Icon name="winRestore" /></Tool>
      <Tool aria-label="Close"><Icon name="winClose" /></Tool>
    </Tools>
  </TitleBar>
);

/* ---------- ribbon ---------- */

const Tabs = styled.nav`
  display: flex;
  height: 25px;
  padding-left: 1px;
`;
const Tab = styled.button<{ $kind?: 'file' | 'active' | 'wide' }>`
  height: 25px;
  padding: 0 12px;
  ${p => p.$kind === 'file' && css`width: 56px; margin-right: 2px; background: #2a7db5; color: #fff;`}
  ${p => p.$kind === 'wide' && css`padding: 0 14px 0 13px;`}
  ${p => p.$kind === 'active' && css`background: #eeeeee; color: #111;`}
`;
const TabTools = styled.button`
  display: flex;
  align-items: center;
  gap: 6px;
  margin-left: 27px;
`;
const Ribbon = styled.section`
  display: flex;
  height: 121px;
  background: #eeeeee;
  border-bottom: 1px solid #c6c6c6;
`;
const Panel = styled.div<{ $w: number }>`
  display: flex;
  flex-direction: column;
  width: ${p => p.$w}px;
  height: 119px;
  padding-top: 2px;
  border-right: 1px solid #d9d9d9;
  &:last-child { border-right: 0; }
`;
const PanelBody = styled.div<{ $pad?: number; $gap?: number }>`
  display: flex;
  flex: 1;
  justify-content: center;
  gap: ${p => p.$gap ?? 0}px;
  ${p => p.$pad !== undefined && css`justify-content: flex-start; padding-left: ${p.$pad}px;`}
`;
const PanelName = styled.div`
  display: flex;
  align-items: center;
  justify-content: center;
  gap: 8px;
  height: 20px;
`;
const Tall = styled.button<{ $w: number; $on?: boolean }>`
  display: flex;
  flex-direction: column;
  align-items: center;
  width: ${p => p.$w}px;
  height: 90px;
  margin-top: 2px;
  padding-top: 1px;
  ${p => p.$on && css`background: linear-gradient(#c3dcf4, #afd0ef); border: 1px solid #0a64c8; padding-top: 0;`}
`;
const TallArt = styled.span`
  display: grid;
  place-items: center;
  height: 43px;
`;
const TallText = styled.span`
  padding: 4px 0;
`;
const Stack = styled.div`
  display: flex;
  flex-direction: column;
`;
const Framed = styled.button`
  display: grid;
  place-items: center;
  width: 47px;
  height: 42px;
  border: 1px solid #0a64c8;
  background: #b9d6f0;
`;
const BigCells = styled.div<{ $cols: string }>`
  display: grid;
  grid-template-columns: ${p => p.$cols};
  grid-auto-rows: 45px;
  padding-top: 1px;
`;
const SmallCells = styled.div<{ $cols: string }>`
  display: grid;
  grid-template-columns: ${p => p.$cols};
  grid-auto-rows: 31px;
`;
const Cell = styled.button<{ $left?: boolean }>`
  display: flex;
  align-items: center;
  justify-content: ${p => (p.$left ? 'flex-start' : 'center')};
  gap: 7px;
`;
const Pad = styled.span`
  display: flex;
  padding-left: 6px;
`;

const Small = ({ name }: { name: string }) => <Cell aria-label={name}><Icon name={name} /></Cell>;
const Menu = ({ of }: { of: string }) => <Cell aria-label={`${of} menu`}><Caret /></Cell>;
const Named = ({ icon, text }: { icon: string; text: string }) => (
  <Cell $left><Icon name={icon} />{text}<Pad><Caret /></Pad></Cell>
);

const RibbonBar = () => (
  <Ribbon>
    <Panel $w={73}>
      <PanelBody>
        <Tall $w={53} $on><TallArt><Icon name="modify" /></TallArt><TallText>Modify</TallText></Tall>
      </PanelBody>
      <PanelName>Select <Glyph width="9" height="5" viewBox="0 0 9 5"><path d="M0 0h9L4.500 5z" fill="#454545" /></Glyph></PanelName>
    </Panel>
    <Panel $w={80}>
      <PanelBody>
        <Stack>
          <BigCells $cols="47px"><Cell aria-label="Type properties"><Icon name="typeProps" /></Cell></BigCells>
          <Framed aria-label="Properties"><Icon name="props" /></Framed>
        </Stack>
      </PanelBody>
      <PanelName>Properties</PanelName>
    </Panel>
    <Panel $w={99}>
      <PanelBody $pad={12}>
        <Tall $w={46}><TallArt><Icon name="paste" /></TallArt><TallText>Paste</TallText><Caret /></Tall>
        <SmallCells $cols="46px"><Small name="scissors" /><Small name="copyClip" /><Small name="matchBrush" /></SmallCells>
      </PanelBody>
      <PanelName>Clipboard</PanelName>
    </Panel>
    <Panel $w={179}>
      <PanelBody $pad={7}>
        <SmallCells $cols="90px 31px 31px 14px">
          <Named icon="notch" text="Notch" /><Small name="wallOpen" /><Small name="splitFace" /><span />
          <Named icon="cut" text="Cut" /><Small name="cope" /><Small name="demolish" /><Menu of="Demolish" />
          <Named icon="join" text="Join" /><Small name="wallJoin" /><Small name="hammer" />
        </SmallCells>
      </PanelBody>
      <PanelName>Geometry</PanelName>
    </Panel>
    <Panel $w={67}>
      <PanelBody>
        <Tall $w={61} $on><TallArt><Icon name="activate" /></TallArt><TallText>Activate</TallText></Tall>
      </PanelBody>
      <PanelName>Controls</PanelName>
    </Panel>
    <Panel $w={300}>
      <PanelBody $pad={2} $gap={4}>
        <BigCells $cols="repeat(4, 49px)">
          {['align', 'offset', 'mirrorPick', 'mirrorDraw', 'move', 'copy', 'rotate', 'trim'].map(n => <Small key={n} name={n} />)}
        </BigCells>
        <SmallCells $cols="repeat(3, 31px)">
          {['split', 'splitGap', 'unpin', 'array', 'scale', 'pin', 'trimOne', 'trimMany', 'remove'].map(n => <Small key={n} name={n} />)}
        </SmallCells>
      </PanelBody>
      <PanelName>Modify</PanelName>
    </Panel>
    <Panel $w={81}>
      <PanelBody $pad={2}>
        <SmallCells $cols="31px 10px 36px">
          <Small name="hideBulb" /><Menu of="Hide" /><Small name="displace" />
          <Small name="override" /><Menu of="Override" /><Small name="linework" />
          <Small name="viewBox" />
        </SmallCells>
      </PanelBody>
      <PanelName>View</PanelName>
    </Panel>
    <Panel $w={70}>
      <PanelBody $pad={3}>
        <BigCells $cols="46px 16px">
          <Small name="measure" /><Menu of="Measure" /><Small name="aligned" /><Menu of="Aligned" />
        </BigCells>
      </PanelBody>
      <PanelName>Measure</PanelName>
    </Panel>
    <Panel $w={102}>
      <PanelBody $pad={1}>
        <BigCells $cols="49px 49px">
          <Small name="assembly" /><Small name="group" /><Small name="parts" /><Small name="similar" />
        </BigCells>
      </PanelBody>
      <PanelName>Create</PanelName>
    </Panel>
  </Ribbon>
);

const OptionsBar = styled.div`
  flex: none;
  height: 35px;
  padding-left: 7px;
  background: #eeeeee;
  border-bottom: 2px solid #c9c9c9;
  &::before { content: ''; display: block; width: 10px; height: 32px; background: #e3efd8; }
`;

/* ---------- project browser ---------- */

const Work = styled.main`
  display: flex;
  flex: 1;
  min-height: 0;
`;
const Browser = styled.aside`
  display: flex;
  flex-direction: column;
  width: 305px;
  padding: 0 3px 3px 2px;
  background: #eeeeee;
  border-right: 2px solid #c9c9c9;
`;
const PaneHead = styled.div`
  display: flex;
  align-items: center;
  justify-content: space-between;
  flex: none;
  height: 24px;
  padding: 0 3px 0 2px;
`;
const TreeBox = styled.ul`
  flex: 1;
  background: #fff;
`;
const TreeRow = styled.li`
  display: flex;
  align-items: center;
  height: 22px;
  color: #000;
`;
const dots = (dir: string) => `repeating-linear-gradient(${dir}, #9a9a9a 0 1px, transparent 1px 2px)`;
const Guide = styled.span<{ $v: 'full' | 'top' | 'bottom' | 'none'; $h: boolean }>`
  display: grid;
  place-items: center;
  flex: none;
  width: 26px;
  height: 22px;
  padding: 2px 5px 0 0;
  background:
    ${() => dots('to bottom')} 10px ${p => (p.$v === 'bottom' ? '100%' : '0')} / 1px ${p => ({ full: '100%', top: '50%', bottom: '50%', none: '0' }[p.$v])} no-repeat,
    ${() => dots('to right')} 10px 12px / ${p => (p.$h ? '16px' : '0')} 1px no-repeat;
`;
const Expander = styled.button`
  display: grid;
  place-items: center;
  width: 13px;
  height: 13px;
  border: 1px solid #919191;
  background: linear-gradient(#fff, #e2e2e2);
`;
const NodeText = styled.span<{ $bold?: boolean; $sel?: boolean }>`
  margin-left: 3px;
  padding: 1px 3px;
  ${p => p.$bold && css`font-weight: 700;`}
  ${p => p.$sel && css`background: #e2e2e2;`}
`;

type Node = { d: number; t: string; e?: '+' | '-'; icon?: string; last?: boolean; open?: boolean; bold?: boolean; sel?: boolean };
const nodes: Node[] = [
  { d: 0, t: 'Views (all)', e: '-', icon: 'viewsRoot' },
  { d: 1, t: 'Structural Plans', e: '+' },
  { d: 1, t: 'Floor Plans', e: '-' },
  { d: 2, t: 'BASEMENT' }, { d: 2, t: 'GROUND FLOOR' }, { d: 2, t: 'LEVEL 1' }, { d: 2, t: 'LOWER GROUND' }, { d: 2, t: 'Site' },
  { d: 2, t: 'TOP FLOOR', last: true },
  { d: 1, t: 'Ceiling Plans', e: '+' },
  { d: 1, t: '3D Views', e: '-' },
  { d: 2, t: '{3D}', last: true, bold: true },
  { d: 1, t: 'Elevations (12mm Circle)', e: '-', last: true },
  { d: 2, t: 'East', open: true }, { d: 2, t: 'North', open: true }, { d: 2, t: 'South', open: true },
  { d: 2, t: 'West', last: true, open: true, sel: true },
  { d: 0, t: 'Legends', e: '+', icon: 'legends' },
  { d: 0, t: 'Schedules/Quantities (all)', e: '+', icon: 'schedules' },
  { d: 0, t: 'Sheets (all)', e: '+', icon: 'sheets' },
  { d: 0, t: 'Families', e: '+', icon: 'families' },
  { d: 0, t: 'Groups', e: '+', icon: 'groups' },
  { d: 0, t: 'Revit Links', icon: 'links', last: true },
];

const TreeNode = ({ n, first }: { n: Node; first: boolean }) => (
  <TreeRow>
    {Array.from({ length: n.d }, (_, i) => (
      <Guide key={i} $v={i === 1 && n.open ? 'none' : 'full'} $h={false} />
    ))}
    <Guide $v={first ? 'bottom' : n.last ? 'top' : 'full'} $h>
      {n.e && (
        <Expander aria-label={`Toggle ${n.t}`}>
          <Glyph width="9" height="9" viewBox="0 0 9 9">
            <path d={n.e === '+' ? 'M0 4.500h9M4.500 0v9' : 'M0 4.500h9'} stroke="#2f55a4" />
          </Glyph>
        </Expander>
      )}
    </Guide>
    {n.d !== 1 && <Icon name={n.icon ?? 'sheetIcon'} />}
    <NodeText $bold={n.bold} $sel={n.sel}>{n.t}</NodeText>
  </TreeRow>
);

const ProjectBrowser = () => (
  <Browser>
    <PaneHead>Project Browser - Project Daegu Color...<button aria-label="Close project browser"><Icon name="winClose" /></button></PaneHead>
    <TreeBox>{nodes.map((n, i) => <TreeNode key={n.t} n={n} first={i === 0} />)}</TreeBox>
  </Browser>
);

/* ---------- view area ---------- */

const Center = styled.section`
  display: flex;
  flex: 1;
  flex-direction: column;
  min-width: 0;
  background: #fff;
`;
const ViewTabs = styled.div`
  display: flex;
  flex: none;
  align-items: center;
  height: 25px;
  background: #cccccc;
`;
const ViewTab = styled.button<{ $w: number; $on?: boolean }>`
  display: flex;
  align-items: center;
  gap: 9px;
  width: ${p => p.$w}px;
  height: 25px;
  padding: 0 6px;
  ${p => p.$on && css`background: #fff; font-weight: 700; color: #222;`}
`;
const Grow = styled.span`
  flex: 1;
  text-align: left;
`;
const ViewBody = styled.div`
  display: grid;
  flex: 1;
  min-height: 0;
  grid-template-columns: minmax(0, 1fr) 20px;
  padding-right: 3px;
  border-bottom: 2px solid #fff;
`;
const Canvas = styled.div`
  position: relative;
  min-height: 0;
  background: #fff;
`;
const Scene = styled.svg`
  display: block;
  width: 100%;
  height: 100%;
`;
const VScroll = styled.div`
  display: grid;
  place-items: center;
  margin-top: 2px;
  background: #eeeeee;
`;
const Thumb = styled.span<{ $w: number; $h: number }>`
  width: ${p => p.$w}px;
  height: ${p => p.$h}px;
  background: #888;
`;
const ViewBar = styled.div`
  display: flex;
  grid-column: 1 / -1;
  align-items: center;
  height: 22px;
  margin-left: 2px;
  padding-bottom: 1px;
  background: #efefef;
  border-bottom: 1px solid #c4c4c4;
`;
const ScaleBtn = styled.button`
  width: 89px;
  padding-left: 6px;
  color: #000;
  font-size: 13px;
`;
const ViewTool = styled.button`
  display: grid;
  place-items: center;
  width: 25px;
  height: 20px;
`;
const HScroll = styled.div`
  display: grid;
  flex: 1;
  place-items: center;
  padding-right: 8px;
`;
const NavBar = styled.div`
  position: absolute;
  top: 173px;
  right: 1px;
  display: flex;
  flex-direction: column;
  align-items: center;
  width: 36px;
  height: 118px;
  padding: 3px;
  border: 2px solid #bcbcbc;
  border-radius: 5px;
  background: #f4f4f4;
`;
const NavButton = styled.button<{ $h: number; $end?: boolean; $line?: boolean }>`
  display: grid;
  place-items: center;
  width: 26px;
  height: ${p => p.$h}px;
  ${p => p.$end && css`place-items: center end;`}
  ${p => p.$line && css`border-bottom: 1px solid #bcbcbc;`}
`;

type Pt = [number, number];
const curve = (pts: Pt[], start = 'M') =>
  pts.reduce((d, p, i) => {
    if (i === 0) return `${start}${p[0]} ${p[1]}`;
    const a = pts[i - 2] ?? pts[i - 1];
    const b = pts[i - 1];
    const n = pts[i + 1] ?? p;
    return `${d}C${b[0] + (p[0] - a[0]) / 6} ${b[1] + (p[1] - a[1]) / 6} ${p[0] - (n[0] - b[0]) / 6} ${p[1] - (n[1] - b[1]) / 6} ${p[0]} ${p[1]}`;
  }, '');

const archOuter: Pt[] = [[702, 521], [753, 463], [795, 436], [845, 416], [903, 408], [955, 416], [1003, 437], [1040, 465], [1065, 499], [1082, 539], [1091, 580], [1092, 606]];
const archMid: Pt[] = [[710, 509], [745, 473], [795, 446], [853, 430], [903, 425], [953, 432], [1003, 450], [1042, 476], [1065, 502], [1074, 535], [1076, 574]];
const archInner: Pt[] = [[752, 530], [782, 492], [817, 467], [860, 449], [910, 443], [950, 449], [985, 466], [1013, 491], [1032, 523], [1034, 569]];
const archBase: Pt[] = [[758, 549], [790, 521], [837, 495], [880, 484], [922, 482], [957, 493], [990, 515], [1015, 541], [1026, 567], [1026, 599]];
const waveTop: Pt[] = [[778, 739], [833, 761], [902, 769], [986, 757], [1057, 724], [1113, 687], [1175, 634], [1228, 595], [1300, 558], [1379, 528], [1454, 508]];
const waveSecond: Pt[] = [[779, 741], [833, 767], [904, 779], [976, 771], [1057, 734], [1114, 694], [1170, 644], [1225, 607], [1297, 569], [1376, 539], [1452, 519]];
const waveThird: Pt[] = [[731, 778], [787, 793], [850, 805], [920, 806], [1005, 790], [1067, 764], [1130, 722], [1190, 670], [1241, 632], [1312, 593], [1389, 562], [1465, 543]];
const waveBase: Pt[] = [[731, 778], [787, 805], [837, 823], [887, 833], [940, 834], [1000, 822], [1051, 803], [1118, 764], [1183, 714], [1241, 667], [1314, 625], [1388, 595], [1470, 573]];
const levels: [number, number, number][] = [[421, 438, 805], [428, 443, 813], [452, 468, 837], [460, 476, 845], [469, 486, 855]];
const grips: Pt[] = [[731, 778], [887, 833], [1051, 803], [1183, 714], [1314, 625], [1470, 573]];
const band = (a: Pt[], b: Pt[]) => `${curve(a)}${curve([...b].reverse(), 'L')}Z`;

const Model = () => (
  <Scene viewBox="305 243 1297 721" preserveAspectRatio="xMidYMid meet" role="img" aria-label="3D view">
    <defs>
      <linearGradient id="archFill" gradientUnits="userSpaceOnUse" x1="755" x2="1036" y1="0" y2="0">
        <stop offset="0" stopColor="#fbfcff" />
        <stop offset=".2" stopColor="#eeeff4" />
        <stop offset=".5" stopColor="#cdced2" />
        <stop offset=".54" stopColor="#a3a4a6" />
        <stop offset="1" stopColor="#a3a4a6" />
      </linearGradient>
      <linearGradient id="waveFill" gradientUnits="userSpaceOnUse" x1="731" x2="1470" y1="0" y2="0">
        <stop offset="0" stopColor="#a4a5a8" />
        <stop offset=".07" stopColor="#c9cacd" />
        <stop offset=".22" stopColor="#dcdde1" />
        <stop offset=".38" stopColor="#f7f9fe" />
        <stop offset=".5" stopColor="#ffffff" />
        <stop offset=".72" stopColor="#ffffff" />
        <stop offset=".82" stopColor="#f6f9fe" />
        <stop offset="1" stopColor="#e8ebf1" />
      </linearGradient>
      <radialGradient id="cubeShadow">
        <stop offset="0" stopColor="#777" />
        <stop offset=".5" stopColor="#bbb" stopOpacity=".8" />
        <stop offset="1" stopColor="#fff" stopOpacity="0" />
      </radialGradient>
      <clipPath id="solids"><path d={`${band(archMid, archBase)}${band(waveTop, waveBase)}`} /></clipPath>
    </defs>

    <path d={band(archInner, archBase)} fill="url(#archFill)" />
    <path d="M890 448l12 6-10 8 11 8-9 7 6 6h10V446z" fill="#a3a4a6" fillOpacity=".6" />
    <path d={band(waveThird, waveBase)} fill="url(#waveFill)" />
    <path d="M708 509L752 530L758 549L702 521ZM1034 569L1076 574L1092 606L1026 599Z" fill="#a3a4a6" stroke="#111" />
    <g fill="none" stroke="#808080">
      <path d={curve(archMid)} />
      <path d={curve(waveSecond)} />
      <path d={curve(waveThird)} />
      <path d="M779 741L734 777M1452 519L1470 573M1454 508L1452 519" />
    </g>
    <g fill="none" stroke="#111">
      <path d={curve(archOuter)} />
      <path d={curve(archInner)} stroke="#555" />
      <path d={curve(archBase)} />
      <path d={curve(waveTop)} />
      <path d={curve(waveBase)} />
      <path d="M778 739L731 778M1454 508L1465 543L1470 573" />
    </g>
    <g fill="none" stroke="#111" strokeDasharray="7 3 2 3">
      {levels.map(([top, tick, end]) => <path key={top} d={`M685 ${tick}L702 ${top}L1224 ${end}`} />)}
    </g>
    <g fill="none" stroke="#fff" strokeOpacity=".6" strokeWidth="2" clipPath="url(#solids)">
      {levels.slice(2).map(([top, , end]) => <path key={top} d={`M702 ${top}L1224 ${end}`} />)}
    </g>
    {levels.map(([top, , end]) => <path key={top} d={`M1216 ${end - 12}L1224 ${end - 1}`} stroke="#aaa" strokeWidth="2" strokeDasharray="3 1" />)}
    {levels.map(([top, , end]) => <circle key={top} cx="1224" cy={end} r="1.500" fill="#14348c" />)}
    {grips.map(([x, y]) => <circle key={x} cx={x} cy={y} r="2.500" fill="#111" />)}

    <g stroke="#b9b9b9" strokeDasharray="2 1">
      <path d="M1448.500 355a62.500 54 0 1 0 125 0a62.500 54 0 1 0 -125 0ZM1463 352a48 41 0 1 1 96 0a48 41 0 1 1 -96 0Z" fill="#f1f1f1" fillRule="evenodd" />
    </g>
    <ellipse cx="1512" cy="357" rx="42" ry="32" fill="url(#cubeShadow)" />
    <g stroke="#8a8a8a" strokeDasharray="2 1">
      <path d="M1509 294L1547 321L1513 352L1476 323Z" fill="#f3f3f3" />
      <path d="M1476 323L1513 352V376L1478 349Z" fill="#e6e6e6" />
      <path d="M1547 321L1513 352V376L1543 345Z" fill="#ececec" />
    </g>
    <g fill="#8a8c90" fontWeight="700" textAnchor="middle" dominantBaseline="central">
      <text transform="translate(1511 322) rotate(142)" fontSize="12">TOP</text>
      <text transform="translate(1495 350) rotate(38)" fontSize="8">RIGHT</text>
      <text transform="translate(1529 348) rotate(-40)" fontSize="8">BACK</text>
      <g fontSize="17" fill="#e6e6e6" stroke="#a6a6a6">
        <text transform="translate(1470 318) rotate(32)">S</text>
        <text transform="translate(1549 314) rotate(-32)">W</text>
        <text transform="translate(1471 388) rotate(32)">E</text>
        <text transform="translate(1556 383) rotate(-32)">N</text>
      </g>
    </g>
  </Scene>
);

const viewTabs: [string, string, number][] = [
  ['plan', 'Site', 160], ['elev', 'North', 160], ['plan', 'TOP FLOOR', 160], ['plan', 'GROUND FLOOR', 177],
  ['elev', 'East', 160], ['elev', 'South', 160], ['elev', 'West', 160],
];
const viewTools = ['vDetail', 'vStyle', 'vSun', 'vShadow', 'vRender', 'vCrop', 'vCropShow', 'vLock', 'vGlasses', 'vReveal', 'vWork', 'vAnalytical', 'vDisplace', 'vConstraint'];

const ViewArea = () => (
  <Center>
    <ViewTabs>
      <ViewTab $w={160} $on><Icon name="house" /><Grow>{'{3D}'}</Grow><Icon name="winClose" /></ViewTab>
      {viewTabs.map(([icon, text, w]) => <ViewTab key={text} $w={w}><Icon name={icon} />{text}</ViewTab>)}
      <Grow />
      <Tool $w={24} aria-label="View list"><Icon name="customize" /></Tool>
    </ViewTabs>
    <ViewBody>
      <Canvas>
        <Model />
        <NavBar>
          <NavButton $h={10} $end aria-label="Close navigation bar"><Icon name="navClose" scale={0.8} /></NavButton>
          <NavButton $h={38} aria-label="Steering wheel"><Icon name="wheel" /></NavButton>
          <NavButton $h={9} $line aria-label="Wheel menu"><Caret color="#999" /></NavButton>
          <NavButton $h={32} aria-label="Zoom in region"><Icon name="zoomRegion" /></NavButton>
          <NavButton $h={8} aria-label="Zoom menu"><Caret color="#999" /></NavButton>
          <NavButton $h={12} $end aria-label="Navigation options"><Icon name="navMenu" scale={0.8} /></NavButton>
        </NavBar>
      </Canvas>
      <VScroll><Thumb $w={6} $h={21} /></VScroll>
      <ViewBar>
        <ScaleBtn>1 : 100</ScaleBtn>
        {viewTools.map(n => <ViewTool key={n} aria-label={n}><Icon name={n} scale={0.95} /></ViewTool>)}
        <HScroll><Thumb $w={21} $h={6} /></HScroll>
        <Icon name="grip" />
      </ViewBar>
    </ViewBody>
  </Center>
);

/* ---------- properties ---------- */

const PropsPane = styled.aside`
  display: flex;
  flex-direction: column;
  width: 295px;
  padding: 0 1px;
  background: #efefef;
  border-left: 3px solid #c9c9c9;
`;
const TypeBox = styled.button`
  display: flex;
  align-items: center;
  gap: 6px;
  flex: none;
  height: 89px;
  padding: 0 2px;
  border: 1px solid #cfcfcf;
  border-bottom-color: #e6e6e6;
  text-align: left;
`;
const Preview = styled.span`
  display: grid;
  place-items: center;
  width: 82px;
  height: 82px;
  border: 1px solid #c8c8c8;
`;
const TypeRow = styled.div`
  display: flex;
  align-items: center;
  flex: none;
  gap: 6px;
  height: 29px;
`;
const Picker = styled.span<{ $w: number; $h: number }>`
  display: grid;
  flex: none;
  width: ${p => p.$w}px;
  height: ${p => p.$h}px;
  border: 1px solid #cfcfcf;
  background: #fff;
  svg { grid-area: 1 / 1; place-self: center end; margin-right: 5px; pointer-events: none; }
`;
const PickerSelect = styled.select<{ $dim?: boolean }>`
  grid-area: 1 / 1;
  width: 100%;
  padding: 0 3px;
  border: 0;
  background: none;
  appearance: none;
  color: ${p => (p.$dim ? '#808080' : '#111')};
`;
const EditType = styled.button`
  display: flex;
  align-items: center;
  gap: 4px;
  height: 28px;
  padding-bottom: 2px;
  color: #111;
`;
const TableWrap = styled.div`
  display: flex;
  flex: 1;
  align-items: flex-start;
  min-height: 0;
  overflow: hidden;
`;
const Scrollbar = styled.div`
  flex: 1;
  display: flex;
  justify-content: center;
  padding: 21px 0 0 0;
`;
const Table = styled.table`
  width: 269px;
  table-layout: fixed;
  border-spacing: 0;
  background: #fff;
  color: #000;
`;
const GroupCell = styled.th`
  height: 24px;
  padding: 0 5px 0 2px;
  background: #dcdcdc;
  font-weight: 400;
  text-align: left;
`;
const GroupFlex = styled.div`
  display: flex;
  justify-content: space-between;
  svg { margin-top: 3px; }
`;
const NameCell = styled.th<{ $dim?: boolean }>`
  height: 24px;
  padding: 0 0 2px 10px;
  border-right: 1px dotted #555;
  border-bottom: 1px dotted #555;
  overflow: hidden;
  font-weight: 400;
  text-align: left;
  color: ${p => (p.$dim ? '#808080' : '#000')};
`;
const ValueCell = styled.td<{ $dim?: boolean }>`
  height: 24px;
  padding: 0 2px;
  border-right: 1px dotted #555;
  border-bottom: 1px dotted #555;
  color: ${p => (p.$dim ? '#808080' : '#000')};
  output { display: block; padding-bottom: 2px; }
`;
const EditBtn = styled.button`
  display: block;
  width: 125px;
  height: 22px;
  margin-left: -1px;
  border: 1px solid #c9c9c9;
  border-bottom: 2px solid #bdbdbd;
  border-radius: 4px;
  background: #fdfdfd;
  color: #000;
  line-height: 18px;
`;
const Check = styled.input`
  display: block;
  appearance: none;
  width: 16px;
  height: 16px;
  margin: 0 1px;
  border: 1px solid #5c5c5c;
  border-radius: 3px;
  background: #f6f6f6;
  &:disabled { border-color: #c4c4c4; }
`;
const ScaleInput = styled.input`
  display: block;
  width: 126px;
  height: 23px;
  margin-left: -2px;
  padding: 0 5px 1px;
  border: 1px solid #000;
  color: #000;
`;
const Foot = styled.div`
  display: flex;
  justify-content: space-between;
  flex: none;
  height: 33px;
  padding: 3px 3px 5px 2px;
`;
const HelpLink = styled.a`
  color: #0a66c8;
  text-decoration: underline;
`;
const Apply = styled.button`
  width: 84px;
  height: 25px;
  border: 1px solid #e9e9e9;
  border-radius: 4px;
  background: #f9f9f9;
  color: #9a9a9a;
`;

type Prop = [string, string, boolean?];
const groups: [string, Prop[]][] = [
  ['Graphics', [
    ['View Scale', 'input'], ['Scale Value    1:', '100', true], ['Detail Level', 'Fine'], ['Parts Visibility', 'Show Original'],
    ['Visibility/Graphi...', 'edit'], ['Graphic Display...', 'edit'], ['Discipline', 'Architectural'], ['Show Hidden Li...', 'By Discipline'],
    ['Default Analysis...', 'None'], ['Show Grids', 'edit'], ['Sun Path', 'check'],
  ]],
  ['Extents', [
    ['Crop View', 'check'], ['Crop Region Vis...', 'check'], ['Annotation Crop', 'check'], ['Far Clip Active', 'check'],
    ['Far Clip Offset', '30480.00', true], ['Scope Box', 'None'], ['Section Box', 'check'],
  ]],
  ['Camera', [
    ['Rendering Setti...', 'edit'], ['Locked Orientat...', 'check', true], ['Projection Mode', 'Orthographic'], ['Eye Elevation', '9370.11'],
  ]],
];
const PreLabel = styled.label`
  white-space: pre;
`;

const Value = ({ id, kind, dim }: { id: string; kind: string; dim?: boolean }) => {
  if (kind === 'edit') return <EditBtn id={id}>Edit...</EditBtn>;
  if (kind === 'check') return <Check id={id} type="checkbox" disabled={dim} />;
  if (kind === 'input') return <ScaleInput id={id} type="text" defaultValue="1 : 100" />;
  return <output id={id}>{kind}</output>;
};

const Properties = () => (
  <PropsPane>
    <PaneHead>Properties<button aria-label="Close properties"><Icon name="winClose" /></button></PaneHead>
    <TypeBox>
      <Preview><Icon name="house" scale={2} /></Preview>
      <Grow>3D View</Grow>
      <Glyph width="10" height="5" viewBox="0 0 10 5"><path d="M0 0h10L5 5z" fill="#333" /></Glyph>
    </TypeBox>
    <TypeRow>
      <Picker $w={193} $h={28}>
        <PickerSelect aria-label="View"><option>3D View: {'{3D}'}</option></PickerSelect>
        <Icon name="chevron" />
      </Picker>
      <EditType><Icon name="editType" />Edit Type</EditType>
    </TypeRow>
    <TableWrap>
      <Table>
        <colgroup><col width="127" /><col width="127" /><col width="15" /></colgroup>
        {groups.map(([name, props]) => (
          <tbody key={name}>
            <tr><GroupCell colSpan={3}><GroupFlex>{name}<Icon name="collapse" /></GroupFlex></GroupCell></tr>
            {props.map(([label, kind, dim]) => {
              const id = label.replace(/\W+/g, '-').toLowerCase();
              return (
                <tr key={label}>
                  <NameCell $dim={dim}><PreLabel htmlFor={id}>{label}</PreLabel></NameCell>
                  <ValueCell $dim={dim}><Value id={id} kind={kind} dim={dim} /></ValueCell>
                  <ValueCell />
                </tr>
              );
            })}
          </tbody>
        ))}
      </Table>
      <Scrollbar><Thumb $w={6} $h={378} /></Scrollbar>
    </TableWrap>
    <Foot><HelpLink href="#help">Properties help</HelpLink><Apply disabled>Apply</Apply></Foot>
  </PropsPane>
);

/* ---------- status bar ---------- */

const StatusBar = styled.footer`
  display: flex;
  flex: none;
  align-items: center;
  height: 31px;
  padding-left: 2px;
  color: #111;
`;
const StatusText = styled.span`
  width: 682px;
  padding-top: 4px;
`;
const StatusTool = styled.button<{ $w: number }>`
  display: flex;
  align-items: center;
  justify-content: center;
  gap: 2px;
  width: ${p => p.$w}px;
`;

const Status = () => (
  <StatusBar>
    <StatusText>Click to select, TAB for alternates, CTRL adds, SHIFT unselects.</StatusText>
    <StatusTool $w={30} aria-label="Worksets"><Icon name="worksets" /></StatusTool>
    <Gap $w={3} />
    <Picker $w={254} $h={24}>
      <PickerSelect aria-label="Active workset"><option></option></PickerSelect>
      <Icon name="chevron" />
    </Picker>
    <Gap $w={6} />
    <StatusTool $w={44}><Icon name="editable" />:0</StatusTool>
    <Gap $w={12} />
    <StatusTool $w={34} aria-label="Design options"><Icon name="options" /></StatusTool>
    <StatusTool $w={26} aria-label="Pick to edit"><Icon name="pickEdit" /></StatusTool>
    <Gap $w={5} />
    <Picker $w={254} $h={24}>
      <PickerSelect $dim aria-label="Design option"><option>Main Model</option></PickerSelect>
      <Icon name="chevron" />
    </Picker>
    <Grow />
    {['selLinks', 'selUnderlay', 'selPinned', 'selFace', 'dragSel', 'background'].map(n => (
      <StatusTool key={n} $w={30} aria-label={n}><Icon name={n} /></StatusTool>
    ))}
    <StatusTool $w={38}><Icon name="filter" />:0</StatusTool>
    <Gap $w={65} />
    <Rule />
  </StatusBar>
);

const ribbonTabs = ['Architecture', 'Structure', 'Steel', 'Precast', 'Systems', 'Insert', 'Annotate'];
const wideTabs = ['Analyze', 'Massing & Site', 'Collaborate', 'View', 'Manage', 'Add-Ins'];

const App = () => (
  <Shell>
    <Global />
    <AppTitle />
    <Tabs>
      <Tab $kind="file">File</Tab>
      {ribbonTabs.map(t => <Tab key={t}>{t}</Tab>)}
      {wideTabs.map(t => <Tab key={t} $kind="wide">{t}</Tab>)}
      <Tab $kind="active">Modify</Tab>
      <TabTools aria-label="Ribbon display"><Icon name="ribbonState" /><Caret /></TabTools>
    </Tabs>
    <RibbonBar />
    <OptionsBar />
    <Work>
      <ProjectBrowser />
      <ViewArea />
      <Properties />
    </Work>
    <Status />
  </Shell>
);

export default App;
